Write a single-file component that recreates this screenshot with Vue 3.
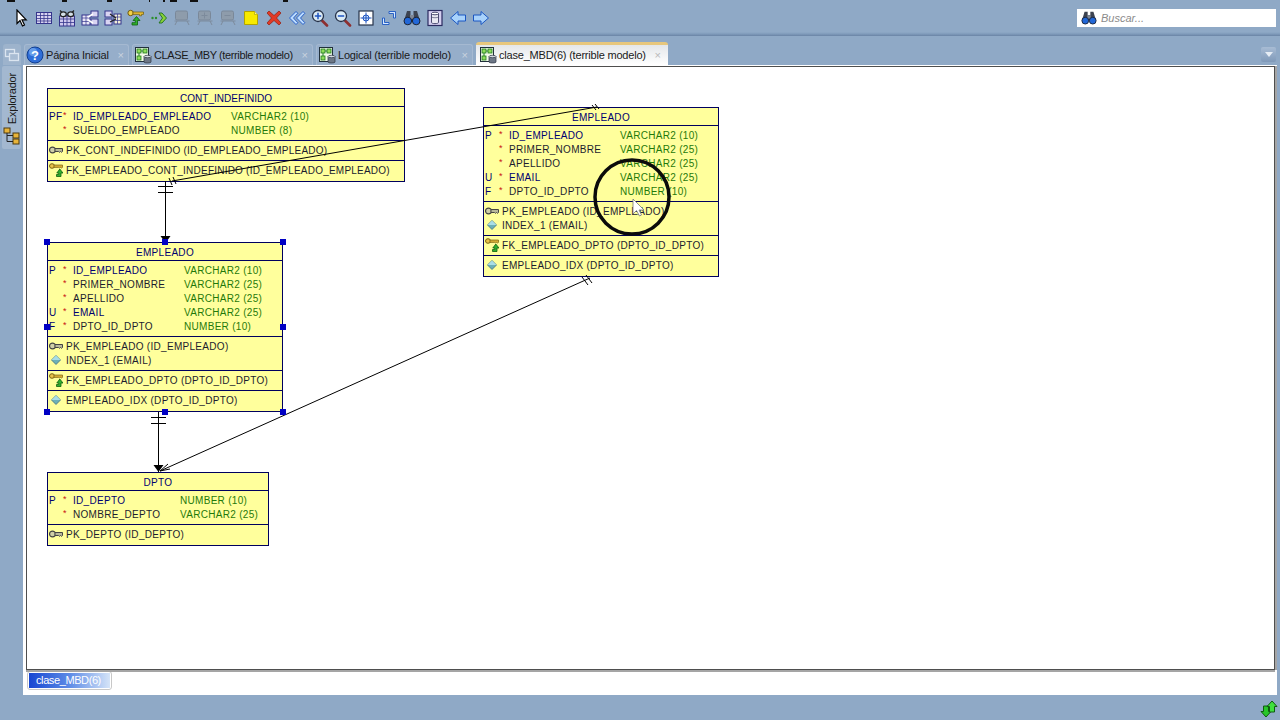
<script setup>
const menuBits = [[7, 8], [62, 5], [107, 5], [149, 1], [163, 2], [170, 7], [190, 8], [283, 5]]

const toolIcons = [
  'i-cursor', 'i-grid', 'i-view', 'i-split', 'i-merge', 'i-keyup', 'i-dots',
  'i-off', 'i-offplus', 'i-offminus', 'i-note', 'i-x', 'i-back', 'i-zin', 'i-zout',
  'i-fit', 'i-corners', 'i-binoc', 'i-cyl', 'i-left', 'i-right'
]

const tabs = [
  { label: 'Página Inicial', icon: 'i-help', w: 105 },
  { label: 'CLASE_MBY (terrible modelo)', icon: 'i-model', w: 181, tight: true },
  { label: 'Logical (terrible modelo)', icon: 'i-model', w: 157 },
  { label: 'clase_MBD(6) (terrible modelo)', icon: 'i-model', w: 192, active: true }
]

const empleadoCols = [
  { pre: 'P', name: 'ID_EMPLEADO', type: 'VARCHAR2 (10)', key: true },
  { pre: '', name: 'PRIMER_NOMBRE', type: 'VARCHAR2 (25)' },
  { pre: '', name: 'APELLIDO', type: 'VARCHAR2 (25)' },
  { pre: 'U', name: 'EMAIL', type: 'VARCHAR2 (25)', key: true },
  { pre: 'F', name: 'DPTO_ID_DPTO', type: 'NUMBER (10)' }
]
const empleadoSections = [
  [{ icon: 'i-pk', text: 'PK_EMPLEADO (ID_EMPLEADO)' }, { icon: 'i-idx', text: 'INDEX_1 (EMAIL)' }],
  [{ icon: 'i-fk', text: 'FK_EMPLEADO_DPTO (DPTO_ID_DPTO)' }],
  [{ icon: 'i-idx', text: 'EMPLEADO_IDX (DPTO_ID_DPTO)' }]
]

// coordinates on the diagram canvas
const entities = [
  {
    id: 1, title: 'CONT_INDEFINIDO', x: 20, y: 21, w: 358, nameW: 158, tight: true,
    cols: [
      { pre: 'PF', name: 'ID_EMPLEADO_EMPLEADO', type: 'VARCHAR2 (10)', key: true },
      { pre: '', name: 'SUELDO_EMPLEADO', type: 'NUMBER (8)' }
    ],
    sections: [
      [{ icon: 'i-pk', text: 'PK_CONT_INDEFINIDO (ID_EMPLEADO_EMPLEADO)', tight: true }],
      [{ icon: 'i-fk', text: 'FK_EMPLEADO_CONT_INDEFINIDO (ID_EMPLEADO_EMPLEADO)', tight: true }]
    ]
  },
  { id: 2, title: 'EMPLEADO', x: 20, y: 175, w: 236, nameW: 111, cols: empleadoCols, sections: empleadoSections },
  { id: 3, title: 'EMPLEADO', x: 456, y: 40, w: 236, nameW: 111, cols: empleadoCols, sections: empleadoSections },
  {
    id: 4, title: 'DPTO', x: 20, y: 405, w: 222, nameW: 107,
    cols: [
      { pre: 'P', name: 'ID_DEPTO', type: 'NUMBER (10)', key: true },
      { pre: '', name: 'NOMBRE_DEPTO', type: 'VARCHAR2 (25)' }
    ],
    sections: [[{ icon: 'i-pk', text: 'PK_DEPTO (ID_DEPTO)' }]]
  }
]

const handles = [
  [47, 242], [165, 242], [283, 242], [47, 327], [283, 327], [47, 412], [165, 412], [283, 412]
]
</script>

<template>
  <div class="app">
    <svg class="defs" width="0" height="0">
      <defs>
        <symbol id="i-cursor" viewBox="0 0 18 18"><path d="M5 1v13.5l3-3 2.5 5.5 2-1-2.5-5.2h4.2z" fill="#fff" stroke="#000" stroke-width="1.2"/></symbol>
        <symbol id="i-grid" viewBox="0 0 18 18"><rect x="1.5" y="3.5" width="15" height="11" fill="#d9d4f2" stroke="#35358c"/><path d="M1.5 6.5h15M1.5 9.5h15M1.5 12h15M5.5 3.5v11M9 3.5v11M12.7 3.5v11" stroke="#35358c" stroke-width=".8"/></symbol>
        <symbol id="i-view" viewBox="0 0 18 18"><rect x="1.5" y="7" width="15" height="10" fill="#cfc8ee" stroke="#35358c"/><path d="M1.5 10h15M1.5 13.5h15M5.5 7v10M9 7v10M12.7 7v10" stroke="#35358c" stroke-width=".8"/><path d="M2 1.5l2 2M16 1.5l-2 2" stroke="#222" stroke-width="1.2"/><ellipse cx="5.3" cy="5.3" rx="3" ry="2.4" fill="#d5e0e8" stroke="#222" stroke-width="1.3"/><ellipse cx="12.7" cy="5.3" rx="3" ry="2.4" fill="#d5e0e8" stroke="#222" stroke-width="1.3"/></symbol>
        <symbol id="i-split" viewBox="0 0 18 18"><rect x="1" y="6" width="8" height="10" fill="#e8e6f6" stroke="#35358c"/><rect x="10" y="2" width="7" height="6" fill="#d9d4f2" stroke="#35358c"/><rect x="10" y="10" width="7" height="6" fill="#d9d4f2" stroke="#35358c"/><path d="M1 9h8M1 12.500h8M5 6v10" stroke="#35358c" stroke-width=".7"/><path d="M7 8l5-3M7 11l5 3" stroke="#fff" stroke-width="1.6"/></symbol>
        <symbol id="i-merge" viewBox="0 0 18 18"><rect x="1" y="2" width="7" height="6" fill="#d9d4f2" stroke="#35358c"/><rect x="1" y="10" width="7" height="6" fill="#d9d4f2" stroke="#35358c"/><rect x="10" y="5" width="7" height="10" fill="#f0eed6" stroke="#35358c"/><path d="M10 8h7M10 11.500h7M13.500 5v10" stroke="#35358c" stroke-width=".7"/><path d="M6 5l6 4M6 13l6-3" stroke="#222" stroke-width="1.2"/></symbol>
        <symbol id="i-keyup" viewBox="0 0 18 18"><circle cx="3.600" cy="4" r="2.700" fill="#f2d24a" stroke="#6d5a10"/><path d="M6 3h10.500v2.400h-2v1.400h-2V5.400H6z" fill="#e5bc34" stroke="#6d5a10" stroke-width=".7"/><path d="M5 16h5.500v-4.500H13L9.500 7.500 6 11.500h2.300v2.200H5z" fill="#2fae2f" stroke="#0e5f0e" stroke-width=".8"/></symbol>
        <symbol id="i-dots" viewBox="0 0 18 18"><circle cx="2.500" cy="9" r="1.200" fill="#2c8f2c"/><circle cx="6" cy="9" r="1.200" fill="#2c8f2c"/><path d="M9 4h3l4.500 5-4.500 5H9l3.500-5z" fill="#8ad13a" stroke="#1c6f1c" stroke-width=".9"/></symbol>
        <symbol id="i-off" viewBox="0 0 18 18"><rect x="2.500" y="2" width="12" height="9" rx="1.500" fill="#8e9cab" stroke="#7a8899"/><path d="M1.500 12h15M4 12l-2 4M14 12l2 4" stroke="#7d8b9c" fill="none"/></symbol>
        <symbol id="i-offplus" viewBox="0 0 18 18"><rect x="2.500" y="2" width="12" height="9" rx="1.500" fill="#8e9cab" stroke="#7a8899"/><path d="M1.500 12h15M4 12l-2 4M14 12l2 4M5.500 6.500h6M8.500 3.500v6" stroke="#7d8b9c" fill="none"/></symbol>
        <symbol id="i-offminus" viewBox="0 0 18 18"><rect x="2.500" y="2" width="12" height="9" rx="1.500" fill="#8e9cab" stroke="#7a8899"/><path d="M1.500 12h15M4 12l-2 4M14 12l2 4M5.500 6.500h6" stroke="#7d8b9c" fill="none"/></symbol>
        <symbol id="i-note" viewBox="0 0 18 18"><path d="M2.500 2.500h10l3 3v10h-13z" fill="#f7ea00" stroke="#b3a400"/><path d="M12.500 2.500v3h3" fill="#fff59a" stroke="#b3a400" stroke-width=".7"/></symbol>
        <symbol id="i-x" viewBox="0 0 18 18"><path d="M2 4l2-2 5 4.500L14 2l2 2-4.500 5 4.500 5-2 2-5-4.500L4 16l-2-2 4.500-5z" fill="#e23a25" stroke="#8e1c10" stroke-width=".7"/></symbol>
        <symbol id="i-back" viewBox="0 0 18 18"><path d="M8 2.500L1.500 9 8 15.500l1.800-1.800L5.500 9l4.300-4.700zM15 2.500L8.500 9l6.500 6.500 1.800-1.800L12.500 9l4.300-4.700z" fill="#bcdcff" stroke="#1c56c4" stroke-width=".9"/></symbol>
        <symbol id="i-zin" viewBox="0 0 18 18"><path d="M10.500 11l5.500 5.500" stroke="#8d2f30" stroke-width="2.600" stroke-linecap="round"/><circle cx="7" cy="7" r="5.500" fill="#dcecf6" stroke="#26324a" stroke-width="1.300"/><path d="M3.800 7h6.400M7 3.800v6.400" stroke="#1f54c0" stroke-width="1.500"/></symbol>
        <symbol id="i-zout" viewBox="0 0 18 18"><path d="M10.500 11l5.500 5.500" stroke="#8d2f30" stroke-width="2.600" stroke-linecap="round"/><circle cx="7" cy="7" r="5.500" fill="#dcecf6" stroke="#26324a" stroke-width="1.300"/><path d="M3.800 7h6.400" stroke="#1f54c0" stroke-width="1.500"/></symbol>
        <symbol id="i-fit" viewBox="0 0 18 18"><rect x="2" y="2" width="14" height="14" fill="#fff" stroke="#26324a" stroke-width="1.200"/><circle cx="9" cy="9" r="3" fill="#cfe2fb" stroke="#1f54c0"/><path d="M9 3.500v11M3.500 9h11" stroke="#1f54c0"/></symbol>
        <symbol id="i-corners" viewBox="0 0 18 18"><path d="M2.500 9v6.500H9v-2H4.500V9zM9 2.500v2h4.500V9h2V2.500z" fill="#d7e9ff" stroke="#1b56c2" stroke-width=".9"/></symbol>
        <symbol id="i-binoc" viewBox="0 0 18 18"><path d="M4 2h3.500v4h3V2H14l3 10H1z" fill="#3d4350"/><rect x="7" y="6" width="4" height="4" fill="#7e8695"/><circle cx="4.800" cy="12" r="3.800" fill="#2167d8" stroke="#1c2333"/><circle cx="13.200" cy="12" r="3.800" fill="#2167d8" stroke="#1c2333"/></symbol>
        <symbol id="i-cyl" viewBox="0 0 18 18"><rect x="2" y="1.500" width="14" height="15" fill="#d5cff0" stroke="#2b2b60" stroke-width="1.200"/><path d="M5.500 4.500v9c0 1.500 7 1.500 7 0v-9z" fill="#e9e9f2" stroke="#4a4a70"/><ellipse cx="9" cy="4.500" rx="3.500" ry="1.300" fill="#fff" stroke="#4a4a70"/><path d="M5.500 8c1 1 6 1 7 0" fill="none" stroke="#4a4a70" stroke-width=".7"/></symbol>
        <symbol id="i-left" viewBox="0 0 18 18"><path d="M9 2.500L1.500 9 9 15.500V12h7.500V6H9z" fill="#a8d2fb" stroke="#1b56c2"/></symbol>
        <symbol id="i-right" viewBox="0 0 18 18"><path d="M9 2.500L16.500 9 9 15.500V12H1.500V6H9z" fill="#a8d2fb" stroke="#1b56c2"/></symbol>
        <symbol id="i-help" viewBox="0 0 18 18"><circle cx="9" cy="9" r="8" fill="#2f6ed8" stroke="#123f90"/><circle cx="7" cy="6" r="4" fill="#7fb0f2" opacity=".7"/><text x="9" y="14" text-anchor="middle" font-family="Liberation Sans, sans-serif" font-weight="700" font-size="13" fill="#fff">?</text></symbol>
        <symbol id="i-model" viewBox="0 0 18 18"><rect x="1.500" y="1.500" width="13" height="14" fill="#f4fbe8" stroke="#22313c"/><rect x="3" y="3" width="4" height="4" fill="#8fdc5a" stroke="#1e7a1e" stroke-width=".8"/><rect x="9" y="3" width="4" height="4" fill="#8fdc5a" stroke="#1e7a1e" stroke-width=".8"/><rect x="3" y="10" width="4" height="4" fill="#8fdc5a" stroke="#1e7a1e" stroke-width=".8"/><path d="M5 7v3M7 5h2" stroke="#1e7a1e"/><path d="M10 10.500v5.500c0 1.300 7 1.300 7 0v-5.500z" fill="#6d7786" stroke="#2a3240" stroke-width=".7"/><ellipse cx="13.500" cy="10.500" rx="3.500" ry="1.200" fill="#d4dae2" stroke="#2a3240" stroke-width=".7"/></symbol>
        <symbol id="i-windows" viewBox="0 0 18 18"><rect x="2.500" y="3.500" width="9" height="7" fill="none" stroke="#dbe5f0" stroke-width="1.300"/><rect x="6.500" y="7.500" width="9" height="7" fill="#a8bcd3" stroke="#dbe5f0" stroke-width="1.300"/></symbol>
        <symbol id="i-tree" viewBox="0 0 18 18"><rect x="1" y="1" width="6" height="5" fill="#e8b43a" stroke="#4c3a10"/><rect x="10" y="6" width="6" height="5" fill="#e8b43a" stroke="#4c3a10"/><rect x="10" y="12" width="6" height="5" fill="#e8b43a" stroke="#4c3a10"/><path d="M4 6v8.500h6M4 8.500h6" fill="none" stroke="#222"/></symbol>
        <symbol id="i-pk" viewBox="0 0 14 14"><ellipse cx="3.500" cy="7" rx="3" ry="2.800" fill="#cfcfa8" stroke="#444" stroke-width="1.200"/><path d="M6 5.500h7.500v3l-1 .8-1-.8-1 .8-1-.8H6z" fill="#b8b89a" stroke="#444"/></symbol>
        <symbol id="i-fk" viewBox="0 0 14 14"><ellipse cx="3" cy="3" rx="2.500" ry="2.300" fill="#e8c34a" stroke="#7a6212"/><path d="M5 2h8.500v2.400l-1 .6-1-.6-1 .6-1-.6H5z" fill="#d7ae35" stroke="#7a6212" stroke-width=".7"/><path d="M7.500 13.500H12V10h2L10.800 6 7.800 10h1.900v1.500H7.500z" fill="#2fae2f" stroke="#0e5f0e" stroke-width=".8"/></symbol>
        <symbol id="i-idx" viewBox="0 0 14 14"><path d="M7 2.500L11.500 7 7 11.500 2.500 7z" fill="#6bb0b8" stroke="#3f6f80" stroke-width=".8"/><path d="M7 2.500L11.500 7H2.500z" fill="#a9dde6"/></symbol>
        <symbol id="i-sync" viewBox="0 0 18 18"><path d="M6 17L1 11.500h2.500V6h5v5.500H11z" fill="#27c628" stroke="#0f5c10"/><path d="M12 1l5 5.500h-2.500V12h-5V6.500H7z" fill="#3fe03f" stroke="#0f5c10"/></symbol>
      </defs>
    </svg>

    <svg class="menu-cut" width="1280" height="2">
      <rect v-for="b in menuBits" :key="b[0]" :x="b[0]" y="0" :width="b[1]" height="2" fill="#111" />
    </svg>

    <div class="toolbar">
      <div class="tools">
        <svg v-for="(icon, i) in toolIcons" :key="i" class="tool" width="18" height="18"><use :href="'#' + icon" /></svg>
      </div>
      <div class="search">
        <svg width="16" height="16"><use href="#i-binoc" /></svg>
        <span>Buscar...</span>
      </div>
    </div>

    <div class="tabbar">
      <div class="win-btn"><svg width="18" height="18"><use href="#i-windows" /></svg></div>
      <div
        v-for="tab in tabs"
        :key="tab.label"
        class="tab"
        :class="{ active: tab.active }"
        :style="{ width: tab.w + 'px' }"
      >
        <svg width="18" height="18"><use :href="'#' + tab.icon" /></svg>
        <span class="tab-label" :class="{ tight: tab.tight }">{{ tab.label }}</span>
        <span class="tab-close">×</span>
      </div>
      <div class="tab-menu"><i></i></div>
    </div>

    <div class="main">
      <div class="side">
        <div class="side-tab">
          <span class="side-label">Explorador</span>
          <svg width="18" height="18"><use href="#i-tree" /></svg>
        </div>
      </div>

      <div class="panel">
        <div class="canvas">
          <div
            v-for="e in entities"
            :key="e.id"
            class="entity"
            :style="{ left: e.x + 'px', top: e.y + 'px', width: e.w + 'px' }"
          >
            <div class="title" :class="{ tight: e.tight }">{{ e.title }}</div>
            <div class="section">
              <div
                v-for="c in e.cols"
                :key="c.name"
                class="col"
                :style="{ gridTemplateColumns: '14px 10px ' + e.nameW + 'px auto' }"
              >
                <span class="pre">{{ c.pre }}</span>
                <span class="req">*</span>
                <span class="name" :class="{ key: c.key }">{{ c.name }}</span>
                <span class="type">{{ c.type }}</span>
              </div>
            </div>
            <div v-for="(s, i) in e.sections" :key="i" class="section">
              <div v-for="row in s" :key="row.text" class="keyrow" :class="{ tight: row.tight }">
                <svg width="14" height="14"><use :href="'#' + row.icon" /></svg>
                <span>{{ row.text }}</span>
              </div>
            </div>
          </div>

          <svg class="lines" width="1247" height="602" viewBox="27 67 1247 602">
            <g fill="none" stroke="#000" stroke-width="1">
              <path d="M172 181L597 107" />
              <path d="M169 178l3 7M173 177l3 7M592 105l4 5M595 104l4 5" />
              <path d="M165.500 181V243M158 186.500h15M158 192.500h15" />
              <path d="M158.500 412V472M151 417.500h15M151 423.500h15" />
              <path d="M160 471L590 278M582 277l6 8M586 275l6 8" />
              <path d="M160 471l8-7M160 471l10-2" />
            </g>
            <path d="M165.500 243l-5-7h10z" fill="#000" />
            <path d="M158.500 472l-5-7h10z" fill="#000" />
            <rect
              v-for="h in handles"
              :key="h.join()"
              :x="h[0] - 3"
              :y="h[1] - 3"
              width="6"
              height="6"
              fill="#0000c4"
            />
            <circle cx="632" cy="197" r="37" fill="none" stroke="#0b0b0b" stroke-width="3.500" />
            <path d="M633 199v15l3.500-3.500 3 5.500 2-1-2.500-5h5z" fill="#fff" stroke="#777" stroke-width=".8" />
          </svg>
        </div>
        <div class="sheets">
          <div class="sheet"><span>clase_MBD(6)</span></div>
        </div>
      </div>
    </div>

    <div class="status">
      <svg width="18" height="18"><use href="#i-sync" /></svg>
    </div>
  </div>
</template>

<style>
html, body {
  margin: 0;
  background: #8fa9c6;
}
</style>

<style scoped>
.app {
  width: 1280px;
  height: 720px;
  overflow: hidden;
  display: flex;
  flex-direction: column;
  background: #8fa9c6;
  font-family: "Liberation Sans", Arial, sans-serif;
}
.defs {
  position: absolute;
}
.menu-cut {
  display: block;
  flex: none;
}
.toolbar {
  height: 34px;
  flex: none;
  display: flex;
  align-items: flex-start;
  justify-content: space-between;
  padding-top: 7px;
  box-sizing: border-box;
  background: linear-gradient(#8fa9c6 0, #8fa9c6 30px, #7f9aba 32px, #6f89aa 33.5px, #819cbb 34px);
}
.tools {
  display: flex;
  gap: 5px;
  padding-left: 12px;
}
.tool {
  flex: none;
}
.search {
  width: 199px;
  height: 18px;
  margin-right: 4px;
  display: flex;
  align-items: center;
  gap: 4px;
  padding-left: 4px;
  box-sizing: border-box;
  background: #fff;
  color: #8b8b8b;
  font-size: 11px;
  font-style: italic;
}
.tabbar {
  height: 29px;
  flex: none;
  display: flex;
  align-items: flex-end;
  gap: 3px;
  padding-left: 3px;
  position: relative;
}
.win-btn {
  width: 18px;
  height: 21px;
  display: flex;
  align-items: center;
  justify-content: center;
  background: #9db3cc;
  border-radius: 3px 3px 0 0;
}
.tab {
  height: 21px;
  display: flex;
  align-items: center;
  padding-left: 1px;
  box-sizing: border-box;
  border-radius: 3px 3px 0 0;
  background: #96aeca;
  border: 1px solid #a5b9d1;
  border-bottom: none;
  font-size: 11px;
  color: #1a1a1a;
}
.tab.active {
  height: 23px;
  background: linear-gradient(#e4e7ea, #fff);
  border: none;
  border-top: 3px solid #e7c77d;
  padding-left: 3px;
}
.tab-label {
  letter-spacing: -0.2px;
  white-space: nowrap;
  margin-left: 2px;
}
.tab-label.tight {
  letter-spacing: -0.38px;
}
.tab-close {
  margin-left: auto;
  margin-right: 4px;
  color: #c9d3df;
  font-size: 11px;
}
.tab.active .tab-close {
  margin-right: 7px;
  color: #b9b9b9;
}
.tab-menu {
  position: absolute;
  right: 4px;
  bottom: 3px;
  width: 15px;
  height: 15px;
  border-radius: 2px;
  background: linear-gradient(#a8bcd4, #7f99b9);
  display: flex;
  align-items: center;
  justify-content: center;
}
.tab-menu i {
  width: 0;
  height: 0;
  border-left: 4px solid transparent;
  border-right: 4px solid transparent;
  border-top: 5px solid #e6edf5;
}
.main {
  height: 630px;
  flex: none;
  display: flex;
}
.side {
  width: 23px;
  flex: none;
  padding: 1px 1px 0 2px;
  box-sizing: border-box;
}
.side-tab {
  width: 19px;
  height: 83px;
  display: flex;
  flex-direction: column;
  align-items: center;
  justify-content: flex-end;
  gap: 3px;
  padding-bottom: 4px;
  box-sizing: border-box;
  background: #a3b8d0;
  border-radius: 2px;
}
.side-label {
  writing-mode: vertical-rl;
  transform: rotate(180deg);
  font-size: 11px;
  letter-spacing: -0.2px;
  color: #1a1a1a;
}
.panel {
  width: 1254px;
  flex: none;
  background: #fff;
  padding: 1px 2px 0 3px;
  box-sizing: border-box;
  display: flex;
  flex-direction: column;
}
.canvas {
  position: relative;
  height: 604px;
  flex: none;
  box-sizing: border-box;
  border: 1px solid #4e4e4e;
  box-shadow: 0 2px 0 #a5a5a5, 2px 0 0 #a5a5a5;
  background: #fff;
  overflow: hidden;
}
.entity {
  position: absolute;
  box-sizing: border-box;
  border: 1px solid #00005e;
  background: #ffff9c;
  font-size: 10px;
  letter-spacing: 0.3px;
  color: #1c1c2e;
}
.title {
  height: 17px;
  line-height: 20px;
  text-align: center;
  color: #000070;
}
.title.tight {
  letter-spacing: 0.03px;
}
.section {
  border-top: 1px solid #00005e;
  padding: 2px 0 3px 1px;
}
.section:last-child {
  padding-bottom: 4px;
}
.col {
  display: grid;
  height: 14px;
  line-height: 16px;
  white-space: nowrap;
}
.pre {
  color: #000070;
}
.req {
  color: #c81010;
  font-size: 9px;
  line-height: 12px;
}
.name.key {
  color: #000070;
}
.type {
  color: #1f7a0a;
}
.keyrow {
  display: flex;
  align-items: center;
  gap: 3px;
  height: 14px;
  white-space: nowrap;
}
.keyrow.tight {
  letter-spacing: 0.22px;
}
.keyrow svg {
  flex: none;
}
.lines {
  position: absolute;
  left: 0;
  top: 0;
  pointer-events: none;
}
.sheets {
  padding: 1px 0 0 1px;
  flex: 1;
}
.sheet {
  width: 85px;
  height: 19px;
  box-sizing: border-box;
  padding: 1px;
  border: 1px solid #c8c8c8;
  border-radius: 3px;
}
.sheet span {
  display: block;
  height: 100%;
  padding-left: 7px;
  line-height: 15px;
  font-size: 11px;
  letter-spacing: -0.4px;
  color: #fff;
  background: linear-gradient(90deg, #1746d2, #5d8be6 50%, #d5e4f8);
}
.status {
  height: 25px;
  flex: none;
  display: flex;
  justify-content: flex-end;
  padding-right: 2px;
  padding-top: 5px;
  box-sizing: border-box;
}
</style>
